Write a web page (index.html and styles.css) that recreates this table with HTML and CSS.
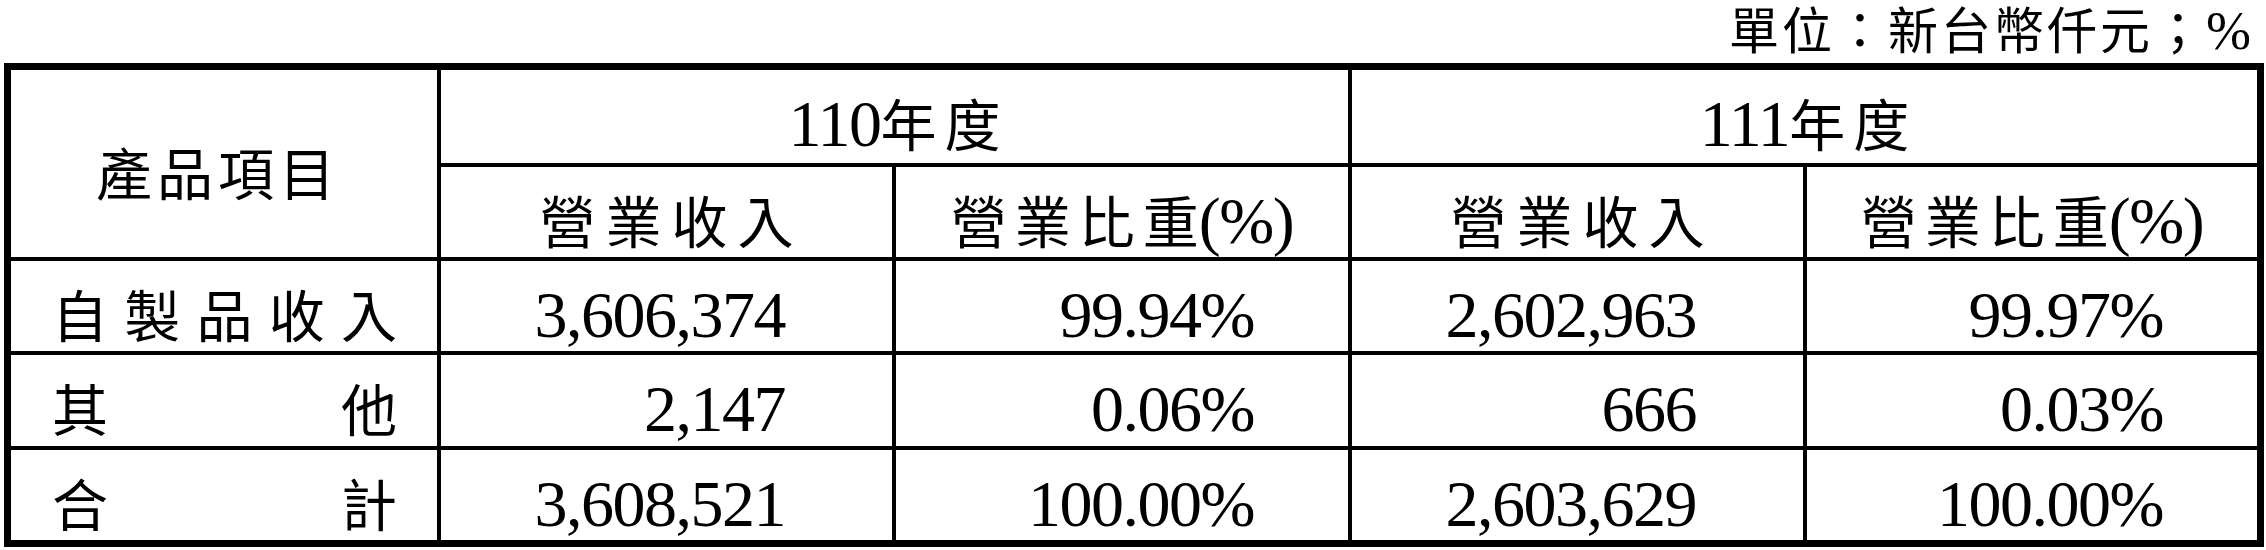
FILE: index.html
```html
<!DOCTYPE html>
<html lang="zh-Hant">
<head>
<meta charset="utf-8">
<title>產品營業收入</title>
<link rel="stylesheet" href="styles.css">
</head>
<body>
<div class="unit"><span class="unit-zh">單位：新台幣仟元；</span><span class="unit-pc">%</span></div>
<div class="sheet">
  <div class="cell zh-cell item">產品項目</div>
  <div class="cell year span-110">110<span class="zh">年度</span></div>
  <div class="cell year span-111">111<span class="zh">年度</span></div>

  <div class="cell zh-cell sub">營業收入</div>
  <div class="cell year"><span class="zh">營業比重</span>(%)</div>
  <div class="cell zh-cell sub">營業收入</div>
  <div class="cell year"><span class="zh">營業比重</span>(%)</div>

  <div class="cell zh-cell label">自製品收入</div>
  <div class="cell num">3,606,374</div>
  <div class="cell pct">99.94%</div>
  <div class="cell num">2,602,963</div>
  <div class="cell pct">99.97%</div>

  <div class="cell zh-cell label">其他</div>
  <div class="cell num">2,147</div>
  <div class="cell pct">0.06%</div>
  <div class="cell num">666</div>
  <div class="cell pct">0.03%</div>

  <div class="cell zh-cell label">合計</div>
  <div class="cell num">3,608,521</div>
  <div class="cell pct">100.00%</div>
  <div class="cell num">2,603,629</div>
  <div class="cell pct">100.00%</div>
</div>
</body>
</html>
```

FILE: styles.css
```css
html, body {
  margin: 0;
  padding: 0;
  background: #ffffff;
  color: #000000;
  font-family: "Liberation Serif", "Noto Sans CJK TC", serif;
}

.unit {
  height: 63px;
  line-height: 63px;
  font-size: 50px;
  text-align: right;
  padding-right: 15px;
  white-space: nowrap;
}

.unit-zh {
  letter-spacing: 3px;
}

.unit-pc {
  font-size: 54px;
}

.sheet {
  display: grid;
  width: max-content;
  margin-left: 4px;
  padding: 7px;
  gap: 4px;
  background: #000000;
  grid-template-columns: 426px 451px 452px 451px 450px;
  grid-template-rows: 93px 90px 90px 91px 90px;
}

.cell {
  background: #ffffff;
  font-size: 66px;
  line-height: 66px;
  letter-spacing: -1.5px;
  padding-top: 21px;
  white-space: nowrap;
  overflow: hidden;
}

.zh {
  font-size: 56px;
  letter-spacing: 8px;
  margin-right: -8px;
}

.zh-cell {
  font-size: 56px;
  padding-top: 24px;
}

.item {
  grid-row: 1 / 3;
  grid-column: 1;
  text-align: center;
  letter-spacing: 5px;
  padding-top: 73px;
  padding-right: 12px;
}

.span-110 {
  grid-column: 2 / 4;
}

.span-111 {
  grid-column: 4 / 6;
}

.year {
  text-align: center;
}

.sub {
  text-align: center;
  letter-spacing: 10px;
  padding-left: 10px;
}

.label {
  letter-spacing: 0;
  text-align: justify;
  text-align-last: justify;
  padding-left: 41px;
  padding-right: 40px;
}

.num {
  text-align: right;
  padding-right: 107px;
}

.pct {
  text-align: right;
  padding-right: 94px;
}
```
